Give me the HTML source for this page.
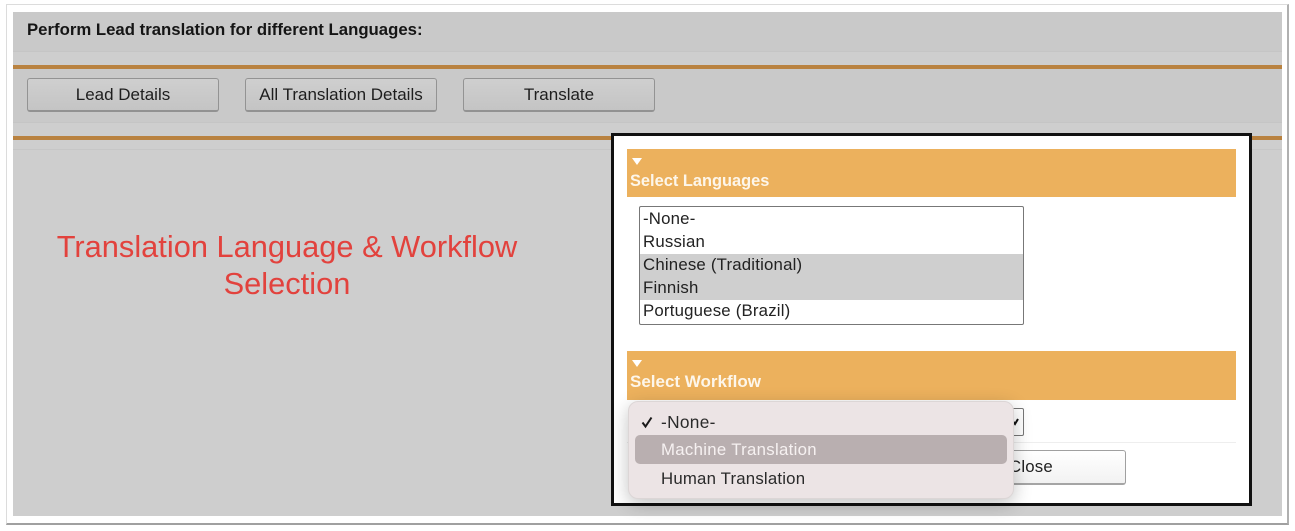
<!DOCTYPE html>
<html><head><meta charset="utf-8">
<style>
html,body{margin:0;padding:0;width:1295px;height:531px;overflow:hidden;background:#fff;font-family:"Liberation Sans",sans-serif}
#w{position:absolute;left:0;top:0;width:1295px;height:531px;background:#fff;filter:blur(.35px)}
.a{position:absolute;white-space:nowrap}
.btn{position:absolute;top:78px;height:34px;width:192px;box-sizing:border-box;border:1px solid #939393;border-bottom:2px solid #929292;border-radius:3px;background:linear-gradient(#cfcfcf,#c4c4c4);text-align:center;font-size:17px;line-height:32px;color:#1e1e1e}
.opt{position:absolute;left:643px;font-size:16.8px;color:#222;letter-spacing:.2px;white-space:nowrap;line-height:18px}
.bar{position:absolute;left:627px;width:609px;background:#ecb15d}
.head{position:absolute;left:630px;color:#fdf6ea;font-weight:bold;font-size:16.4px;white-space:nowrap;line-height:18px}
.tri{position:absolute;left:632px;width:0;height:0;border-left:5px solid transparent;border-right:5px solid transparent;border-top:7px solid #fff}
</style></head>
<body><div id="w">
<div class="a" style="left:6px;top:4px;width:1283px;height:521px;background:#fff;border:1px solid #dcdcdc;border-right:2px solid #b0b0b0;border-bottom:2px solid #a0a0a0;box-sizing:border-box"></div>
<div class="a" style="left:13px;top:12px;width:1269px;height:504px;background:#cecece"></div>
<div class="a" style="left:13px;top:12px;width:1269px;height:39px;background:#c9c9c9"></div>
<div class="a" style="left:13px;top:51px;width:1269px;height:1px;background:#c5c5c5"></div>
<div class="a" style="left:13px;top:65px;width:1269px;height:4px;background:#b98240"></div>
<div class="a" style="left:13px;top:69px;width:1269px;height:53px;background:#c9c9c9"></div>
<div class="a" style="left:13px;top:122px;width:1269px;height:1px;background:#c5c5c5"></div>
<div class="a" style="left:13px;top:136px;width:1269px;height:4px;background:#b98240"></div>
<div class="a" style="left:13px;top:149px;width:1269px;height:1px;background:#c6c6c6"></div>

<div class="a" style="left:27px;top:20px;font-size:16.76px;font-weight:bold;color:#151515;line-height:20px">Perform Lead translation for different Languages:</div>

<div class="btn" style="left:27px">Lead Details</div>
<div class="btn" style="left:245px">All Translation Details</div>
<div class="btn" style="left:463px">Translate</div>

<div class="a" style="left:37px;top:228px;width:500px;text-align:center;font-size:30.8px;line-height:37px;color:#e2423d;white-space:normal">Translation Language &amp; Workflow<br>Selection</div>

<div class="a" style="left:611px;top:133px;width:641px;height:373px;box-sizing:border-box;background:#fff;border:3px solid #111"></div>

<div class="bar" style="top:149px;height:48px"></div>
<div class="tri" style="top:158px"></div>
<div class="head" style="top:172px">Select Languages</div>

<div class="a" style="left:639px;top:206px;width:385px;height:119px;box-sizing:border-box;border:1px solid #777;border-radius:2px;background:#fff"></div>
<div class="a" style="left:640px;top:254px;width:383px;height:46px;background:#cfcfcf"></div>
<div class="opt" style="top:210px">-None-</div>
<div class="opt" style="top:233px">Russian</div>
<div class="opt" style="top:256px">Chinese (Traditional)</div>
<div class="opt" style="top:279px">Finnish</div>
<div class="opt" style="top:302px">Portuguese (Brazil)</div>

<div class="bar" style="top:351px;height:49px"></div>
<div class="tri" style="top:360px"></div>
<div class="head" style="top:373px;font-size:17px">Select Workflow</div>

<div class="a" style="left:980px;top:408px;width:44px;height:28px;box-sizing:border-box;border:1px solid #777;border-radius:2px;background:#fff"></div>
<svg class="a" style="left:1010px;top:417px" width="10" height="10" viewBox="0 0 10 10"><path d="M2 3 L5 7 L8 2" fill="none" stroke="#111" stroke-width="2"/></svg>
<div class="a" style="left:627px;top:442px;width:609px;height:1px;background:#eee"></div>
<div class="a" style="left:960px;top:450px;width:166px;height:35px;box-sizing:border-box;border:1px solid #a0a0a0;border-bottom:2px solid #a5a5a5;border-radius:3px;background:linear-gradient(#fff,#f2f2f2)"></div>
<div class="a" style="left:1009px;top:458px;font-size:16.8px;line-height:18px;color:#222;letter-spacing:.2px">Close</div>

<div class="a" style="left:628px;top:401px;width:386px;height:98px;box-sizing:border-box;background:#ece4e5;border:1px solid #dcd6d6;border-radius:10px;box-shadow:0 5px 18px rgba(0,0,0,.24)"></div>
<div class="a" style="left:635px;top:435px;width:372px;height:29px;background:#b9afb0;border-radius:5px"></div>
<svg class="a" style="left:640px;top:415px" width="14" height="14" viewBox="0 0 14 14"><path d="M2.5 7.5 L5.5 11.5 L11.5 2.5" fill="none" stroke="#1a1a1a" stroke-width="2"/></svg>
<div class="a" style="left:661px;top:413px;font-size:17.3px;line-height:18px;color:#2a2a2a;letter-spacing:.32px">-None-</div>
<div class="a" style="left:661px;top:441px;font-size:16.8px;line-height:18px;color:#f6f1f1;letter-spacing:.3px">Machine Translation</div>
<div class="a" style="left:661px;top:470px;font-size:16.8px;line-height:18px;color:#2a2a2a;letter-spacing:.2px">Human Translation</div>
</div></body></html>
